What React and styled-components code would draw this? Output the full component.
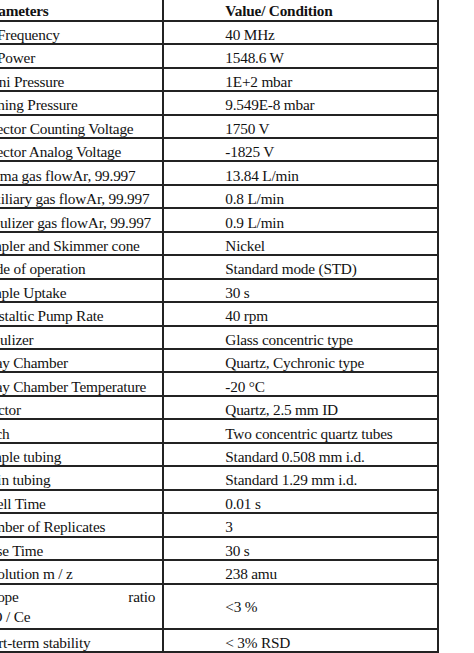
import React from "react";
import styled, { createGlobalStyle } from "styled-components";

const GlobalStyle = createGlobalStyle`
  html, body {
    margin: 0;
    padding: 0;
    background: #ffffff;
    overflow: hidden;
  }
`;

const Page = styled.div`
  width: 474px;
  height: 653px;
  overflow: hidden;
  background: #ffffff;
`;

const Table = styled.table`
  margin-left: -40px;
  margin-top: -3.77px;
  border-collapse: separate;
  border-spacing: 0;
  border-top: 2px solid #232323;
  border-left: 2px solid #232323;
  font-family: "Liberation Serif", "Times New Roman", serif;
  font-size: 15.3px;
  letter-spacing: -0.2px;
  color: #121212;
`;

const Cell = styled.td`
  border-right: 2px solid #232323;
  border-bottom: 2px solid #232323;
  vertical-align: middle;
  white-space: nowrap;
  text-align: left;
  font-weight: ${(p) => (p.$head ? 700 : 400)};
  line-height: ${(p) => (p.$double ? "20.7px" : "17.27px")};
  padding-top: ${(p) => (p.$double ? "2px" : "4.2px")};
  padding-bottom: 0;
  ${(p) =>
    p.$param
      ? `width: 180.3px; padding-left: 13px; padding-right: 7px;`
      : `width: 211.7px; padding-left: 61px; padding-right: 0;`}
`;

const Justified = styled.span`
  display: flex;
  justify-content: space-between;
`;

const rows = [
  ["RF Frequency", "40 MHz"],
  ["RF Power", "1548.6 W"],
  ["Pirani Pressure", "1E+2 mbar"],
  ["Penning Pressure", "9.549E-8 mbar"],
  ["Detector Counting Voltage", "1750 V"],
  ["Detector Analog Voltage", "-1825 V"],
  ["Plasma gas flowAr, 99.997", "13.84 L/min"],
  ["Auxiliary gas flowAr, 99.997", "0.8 L/min"],
  ["Nebulizer gas flowAr, 99.997", "0.9 L/min"],
  ["Sampler and Skimmer cone", "Nickel"],
  ["Mode of operation", "Standard mode (STD)"],
  ["Sample Uptake", "30 s"],
  ["Peristaltic Pump Rate", "40 rpm"],
  ["Nebulizer", "Glass concentric type"],
  ["Spray Chamber", "Quartz, Cychronic type"],
  ["Spray Chamber Temperature", "-20 °C"],
  ["Injector", "Quartz, 2.5 mm ID"],
  ["Torch", "Two concentric quartz tubes"],
  ["Sample tubing", "Standard 0.508 mm i.d."],
  ["Drain tubing", "Standard 1.29 mm i.d."],
  ["Dwell Time", "0.01 s"],
  ["Number of Replicates", "3"],
  ["Rinse Time", "30 s"],
  ["Resolution m / z", "238 amu"],
  [
    <>
      <Justified>
        <span>Isotope</span>
        <span>ratio</span>
      </Justified>
      CeO / Ce
    </>,
    "<3 %",
    true,
  ],
  ["Short-term stability", "< 3% RSD"],
];

export default function App() {
  return (
    <Page>
      <GlobalStyle />
      <Table>
        <thead>
          <tr>
            <Cell as="th" $param $head>
              Parameters
            </Cell>
            <Cell as="th" $head>
              Value/ Condition
            </Cell>
          </tr>
        </thead>
        <tbody>
          {rows.map(([param, value, double], i) => (
            <tr key={i}>
              <Cell $param $double={double}>
                {param}
              </Cell>
              <Cell $double={double}>{value}</Cell>
            </tr>
          ))}
        </tbody>
      </Table>
    </Page>
  );
}
